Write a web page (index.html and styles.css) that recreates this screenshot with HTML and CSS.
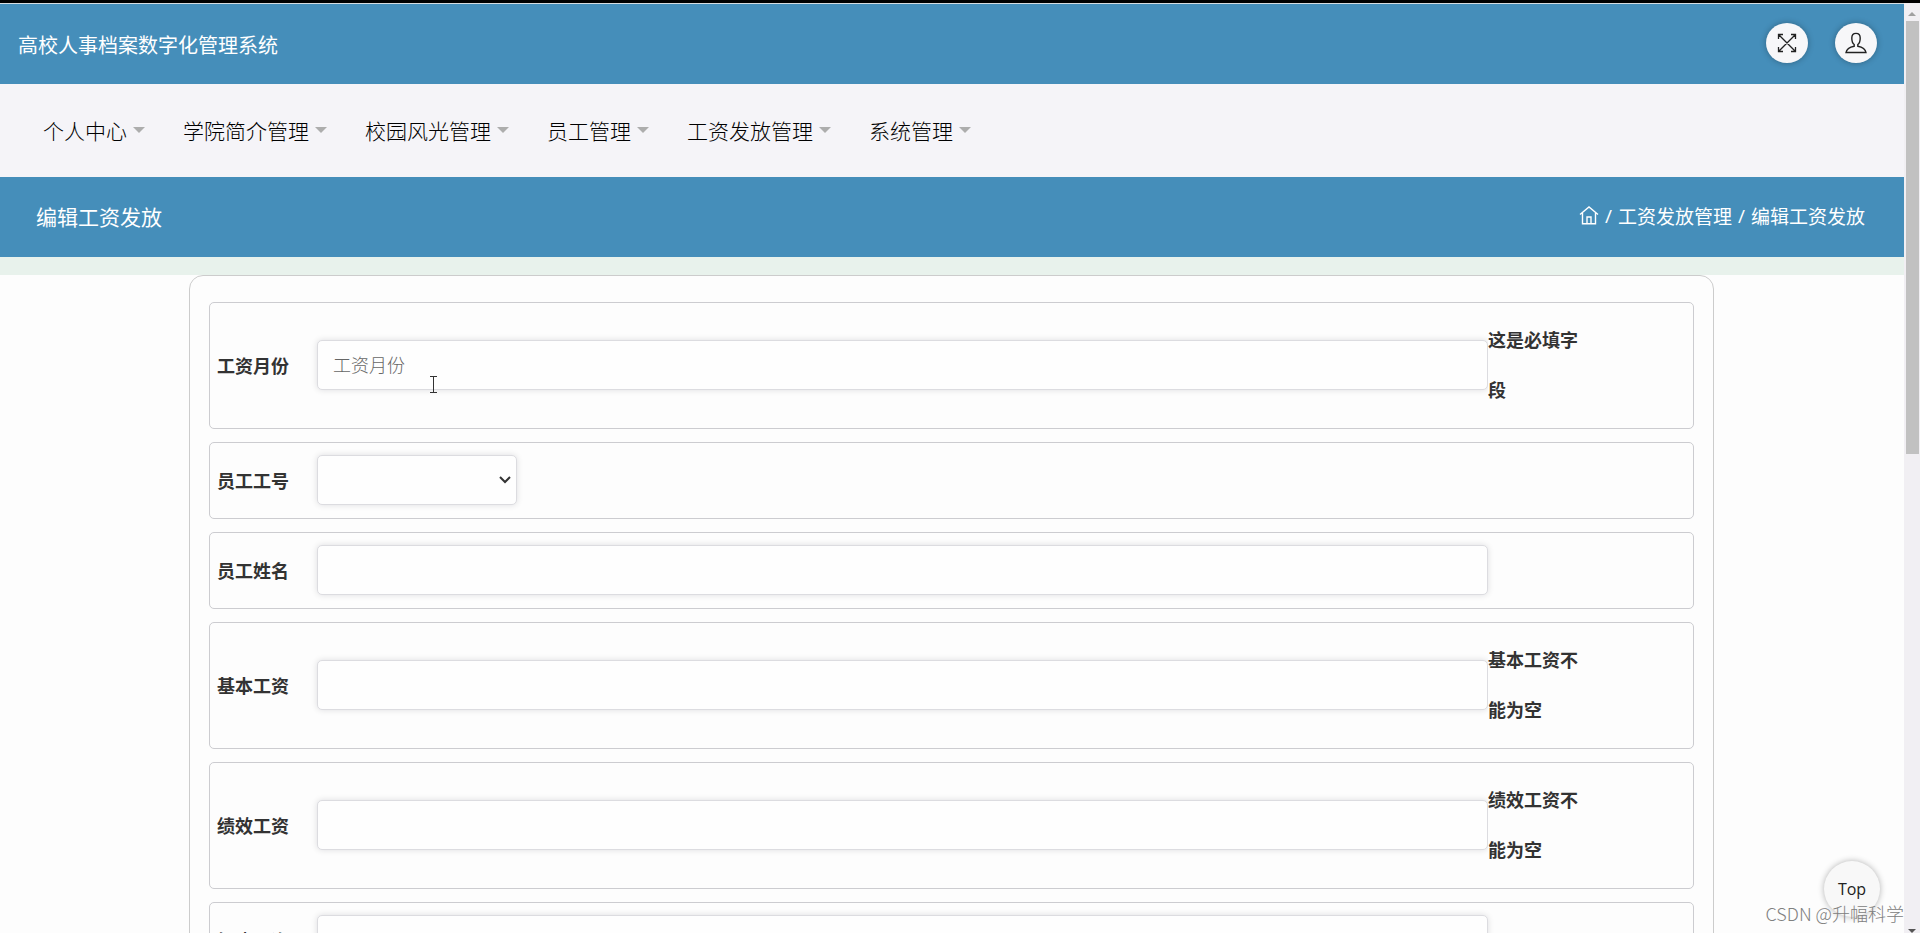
FILE: index.html
```html
<!DOCTYPE html>
<html lang="zh-CN">
<head>
<meta charset="utf-8">
<title>高校人事档案数字化管理系统</title>
<link rel="stylesheet" href="styles.css">
</head>
<body>
<div class="window">
  <div class="page">
    <header class="header">
      <a class="brand" href="#">高校人事档案数字化管理系统</a>
      <div class="tools">
        <button class="tool" type="button" aria-label="全屏">
          <svg width="20" height="20" viewBox="0 0 20 20" fill="none" stroke="#222" stroke-width="1.3"><path d="M1.5 1.5l17 17M18.5 1.5l-17 17M1.5 6V1.5H6M14 1.5h4.500V6M18.500 14v4.500H14M6 18.500H1.500V14"/></svg>
        </button>
        <button class="tool" type="button" aria-label="用户">
          <svg width="22" height="22" viewBox="0 0 22 22" fill="none" stroke="#222" stroke-width="1.4"><path d="M9.200 12.500C7 11 6.800 8.500 6.800 6c0-3 1.700-4.600 4.200-4.600S15.200 3 15.200 6c0 2.500-.2 5-2.400 6.500v1.700c4 .8 7.500 2.400 8.200 6.300H1c.7-3.900 4.200-5.500 8.200-6.300z"/></svg>
        </button>
      </div>
    </header>
    <nav class="nav">
      <button class="nav-item" type="button">个人中心</button>
      <button class="nav-item" type="button">学院简介管理</button>
      <button class="nav-item" type="button">校园风光管理</button>
      <button class="nav-item" type="button">员工管理</button>
      <button class="nav-item" type="button">工资发放管理</button>
      <button class="nav-item" type="button">系统管理</button>
    </nav>
    <div class="titlebar">
      <h1 class="title">编辑工资发放</h1>
      <div class="crumbs">
        <a href="#" aria-label="首页"><svg class="home" width="20" height="20" viewBox="0 0 20 20" fill="none" stroke="#fff" stroke-width="1.400"><path d="M1 8.500L10 1l9 7.500M3.500 7v10.800h13V7M8 17.500V11h4v6.500"/></svg></a>
        <span>/</span><a href="#">工资发放管理</a><span>/</span><span>编辑工资发放</span>
      </div>
    </div>
    <main class="main">
      <form class="card">
        <div class="row">
          <label class="label" for="month">工资月份</label>
          <input class="field" id="month" type="text" placeholder="工资月份">
          <strong class="error">这是必填字段</strong>
        </div>
        <div class="row">
          <label class="label" for="number">员工工号</label>
          <select class="field select" id="number"><option></option></select>
        </div>
        <div class="row">
          <label class="label" for="name">员工姓名</label>
          <input class="field" id="name" type="text">
          <span class="spare"></span>
        </div>
        <div class="row">
          <label class="label" for="base">基本工资</label>
          <input class="field" id="base" type="text">
          <strong class="error">基本工资不能为空</strong>
        </div>
        <div class="row">
          <label class="label" for="merit">绩效工资</label>
          <input class="field" id="merit" type="text">
          <strong class="error">绩效工资不能为空</strong>
        </div>
        <div class="row">
          <label class="label" for="extra">加班工资</label>
          <input class="field" id="extra" type="text">
          <span class="spare"></span>
        </div>
      </form>
    </main>
    <button class="top" type="button">Top</button>
    <div class="watermark">CSDN @升幅科学</div>
    <svg class="cursor" width="9" height="17" viewBox="0 0 9 17" fill="none" stroke="#333" stroke-width="1"><path d="M1 .5h7M1 16.500h7M4.500 1v15"/></svg>
  </div>
  <div class="scrollbar">
    <span class="arrow-up"></span>
    <span class="thumb"></span>
    <span class="arrow-down"></span>
  </div>
</div>
</body>
</html>
```
FILE: styles.css
```css
* { box-sizing: border-box; }

body {
  margin: 0;
  background: #fdfdfd;
  color: #333;
  font-family: "Open Sans", "Noto Sans CJK SC", sans-serif;
  font-size: 18px;
  overflow: hidden;
}

a { color: inherit; text-decoration: none; }

button { border: 0; padding: 0; font-family: inherit; cursor: pointer; }

.window {
  display: flex;
  height: 100vh;
  border-top: 3px solid #000;
  overflow: hidden;
}

.page {
  position: relative;
  flex: 1;
  min-width: 0;
  overflow: hidden;
  border-top: 1px solid #d5dde2;
}

.header, .titlebar {
  display: flex;
  align-items: center;
  justify-content: space-between;
  height: 80px;
  background: #458eba;
  color: #fff;
}

.header { padding: 0 27px 0 18px; }

.brand { font-size: 20px; }

.tools { display: flex; gap: 27px; padding-bottom: 2px; }

.tool {
  display: flex;
  align-items: center;
  justify-content: center;
  width: 42px;
  height: 40px;
  border-radius: 50%;
  background: #f7f7f9;
  box-shadow: 0 0 6px rgba(0, 0, 0, 0.3);
}

.nav {
  display: flex;
  align-items: center;
  gap: 38px;
  height: 93px;
  padding: 0 43px 2px;
  background: #f5f4f8;
}

.nav-item {
  display: flex;
  align-items: center;
  gap: 6px;
  background: none;
  color: #000;
  font-size: 21px;
  font-weight: 300;
}

.nav-item::after {
  content: "";
  border: 6px solid transparent;
  border-top-color: #adadad;
  border-bottom: 0;
}

.titlebar { padding: 0 39px 2px 36px; }

.title { margin: 0; font-size: 21px; font-weight: 400; }

.crumbs { display: flex; align-items: center; gap: 6px; font-size: 19px; }

.home { display: block; }

.main {
  padding: 0 190px 0 189px;
  border-top: 18px solid #e8f2ec;
}

.card {
  display: flex;
  flex-direction: column;
  gap: 13px;
  padding: 26px 19px;
  border: 1px solid #ccc;
  border-radius: 14px;
}

.row {
  display: flex;
  align-items: center;
  padding: 12px 7px 13px;
  border: 1px solid #ccccd0;
  border-radius: 5px;
}

.label { flex: 0 0 100px; font-weight: 700; }

.field {
  flex: 1;
  min-width: 0;
  height: 50px;
  padding: 0 15px;
  border: 1px solid #dcdce0;
  border-radius: 5px;
  background: #fefefe;
  box-shadow: 0 0 6px rgba(0, 0, 30, 0.13);
  color: #333;
  font-family: inherit;
  font-size: 18px;
}

.field::placeholder { color: #666; font-weight: 300; }

.select {
  flex: 0 0 200px;
  appearance: none;
  background: #fefefe url("data:image/svg+xml,%3Csvg xmlns='http://www.w3.org/2000/svg' width='12' height='8' fill='none' stroke='%23333' stroke-width='2'%3E%3Cpath d='M1 1l5 5 5-5'/%3E%3C/svg%3E") no-repeat right 5px center;
}

.error, .spare { flex: 0 0 198px; }

.error {
  padding-right: 98px;
  background: #fdfdfd;
  line-height: 50px;
}

.top {
  position: absolute;
  right: 24px;
  bottom: 16px;
  width: 56px;
  height: 56px;
  border-radius: 50%;
  background: #f8f8f8;
  box-shadow: 0 0 6px rgba(0, 0, 0, 0.3);
  color: #222;
  font-size: 16px;
}

.watermark {
  position: absolute;
  right: 0;
  bottom: 6px;
  color: #808080;
  font-family: "Noto Sans CJK SC", sans-serif;
  font-weight: 300;
  line-height: 28px;
}

.cursor { position: absolute; left: 429px; top: 372px; }

.scrollbar {
  display: flex;
  flex-direction: column;
  align-items: center;
  width: 16px;
  padding: 9px 0 0;
  background: #f1eff3;
}

.arrow-up, .arrow-down { border: 4px solid transparent; }

.arrow-up { border-bottom-color: #a0a0a0; border-top: 0; }

.thumb {
  width: 13px;
  height: 47%;
  margin-top: 5px;
  background: #c1c1c1;
}

.arrow-down { margin-top: auto; border-top-color: #555; border-bottom: 0; }
```
